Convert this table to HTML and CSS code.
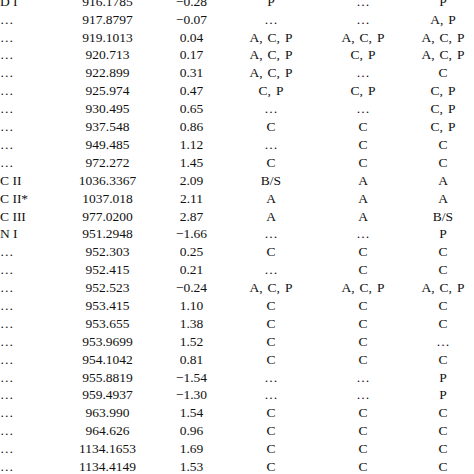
FILE: index.html
```html
<!DOCTYPE html>
<html>
<head>
<meta charset="utf-8">
<link rel="stylesheet" href="styles.css">
</head>
<body>
<div class="tbl">
<div class="c1">D I</div><div class="c">916.1785</div><div class="c">−0.28</div><div class="c w">P</div><div class="c w">…</div><div class="c w">P</div>
<div class="c1">…</div><div class="c">917.8797</div><div class="c">−0.07</div><div class="c w">…</div><div class="c w">…</div><div class="c w">A, P</div>
<div class="c1">…</div><div class="c">919.1013</div><div class="c">0.04</div><div class="c w">A, C, P</div><div class="c w">A, C, P</div><div class="c w">A, C, P</div>
<div class="c1">…</div><div class="c">920.713</div><div class="c">0.17</div><div class="c w">A, C, P</div><div class="c w">C, P</div><div class="c w">A, C, P</div>
<div class="c1">…</div><div class="c">922.899</div><div class="c">0.31</div><div class="c w">A, C, P</div><div class="c w">…</div><div class="c w">C</div>
<div class="c1">…</div><div class="c">925.974</div><div class="c">0.47</div><div class="c w">C, P</div><div class="c w">C, P</div><div class="c w">C, P</div>
<div class="c1">…</div><div class="c">930.495</div><div class="c">0.65</div><div class="c w">…</div><div class="c w">…</div><div class="c w">C, P</div>
<div class="c1">…</div><div class="c">937.548</div><div class="c">0.86</div><div class="c w">C</div><div class="c w">C</div><div class="c w">C, P</div>
<div class="c1">…</div><div class="c">949.485</div><div class="c">1.12</div><div class="c w">…</div><div class="c w">C</div><div class="c w">C</div>
<div class="c1">…</div><div class="c">972.272</div><div class="c">1.45</div><div class="c w">C</div><div class="c w">C</div><div class="c w">C</div>
<div class="c1">C II</div><div class="c">1036.3367</div><div class="c">2.09</div><div class="c w">B/S</div><div class="c w">A</div><div class="c w">A</div>
<div class="c1">C II*</div><div class="c">1037.018</div><div class="c">2.11</div><div class="c w">A</div><div class="c w">A</div><div class="c w">A</div>
<div class="c1">C III</div><div class="c">977.0200</div><div class="c">2.87</div><div class="c w">A</div><div class="c w">A</div><div class="c w">B/S</div>
<div class="c1">N I</div><div class="c">951.2948</div><div class="c">−1.66</div><div class="c w">…</div><div class="c w">…</div><div class="c w">P</div>
<div class="c1">…</div><div class="c">952.303</div><div class="c">0.25</div><div class="c w">C</div><div class="c w">C</div><div class="c w">C</div>
<div class="c1">…</div><div class="c">952.415</div><div class="c">0.21</div><div class="c w">…</div><div class="c w">C</div><div class="c w">C</div>
<div class="c1">…</div><div class="c">952.523</div><div class="c">−0.24</div><div class="c w">A, C, P</div><div class="c w">A, C, P</div><div class="c w">A, C, P</div>
<div class="c1">…</div><div class="c">953.415</div><div class="c">1.10</div><div class="c w">C</div><div class="c w">C</div><div class="c w">C</div>
<div class="c1">…</div><div class="c">953.655</div><div class="c">1.38</div><div class="c w">C</div><div class="c w">C</div><div class="c w">C</div>
<div class="c1">…</div><div class="c">953.9699</div><div class="c">1.52</div><div class="c w">C</div><div class="c w">C</div><div class="c w">…</div>
<div class="c1">…</div><div class="c">954.1042</div><div class="c">0.81</div><div class="c w">C</div><div class="c w">C</div><div class="c w">C</div>
<div class="c1">…</div><div class="c">955.8819</div><div class="c">−1.54</div><div class="c w">…</div><div class="c w">…</div><div class="c w">P</div>
<div class="c1">…</div><div class="c">959.4937</div><div class="c">−1.30</div><div class="c w">…</div><div class="c w">…</div><div class="c w">P</div>
<div class="c1">…</div><div class="c">963.990</div><div class="c">1.54</div><div class="c w">C</div><div class="c w">C</div><div class="c w">C</div>
<div class="c1">…</div><div class="c">964.626</div><div class="c">0.96</div><div class="c w">C</div><div class="c w">C</div><div class="c w">C</div>
<div class="c1">…</div><div class="c">1134.1653</div><div class="c">1.69</div><div class="c w">C</div><div class="c w">C</div><div class="c w">C</div>
<div class="c1">…</div><div class="c">1134.4149</div><div class="c">1.53</div><div class="c w">C</div><div class="c w">C</div><div class="c w">C</div>
</div>
</body>
</html>
```
FILE: styles.css
```css
html, body {
  margin: 0;
  padding: 0;
  background: #fff;
  overflow: hidden;
}
body {
  font-family: "Liberation Serif", "DejaVu Serif", serif;
  font-size: 13.5px;
  color: #111;
}
.tbl {
  display: grid;
  grid-template-columns: 60px 95px 73px 86px 98px 62px;
  grid-auto-rows: 17.9px;
  line-height: 17.9px;
  margin-top: -7.2px;
}
.c1 {
  text-align: left;
  white-space: nowrap;
}
.c {
  text-align: center;
  white-space: nowrap;
}
.w {
  word-spacing: 1.6px;
}
```
